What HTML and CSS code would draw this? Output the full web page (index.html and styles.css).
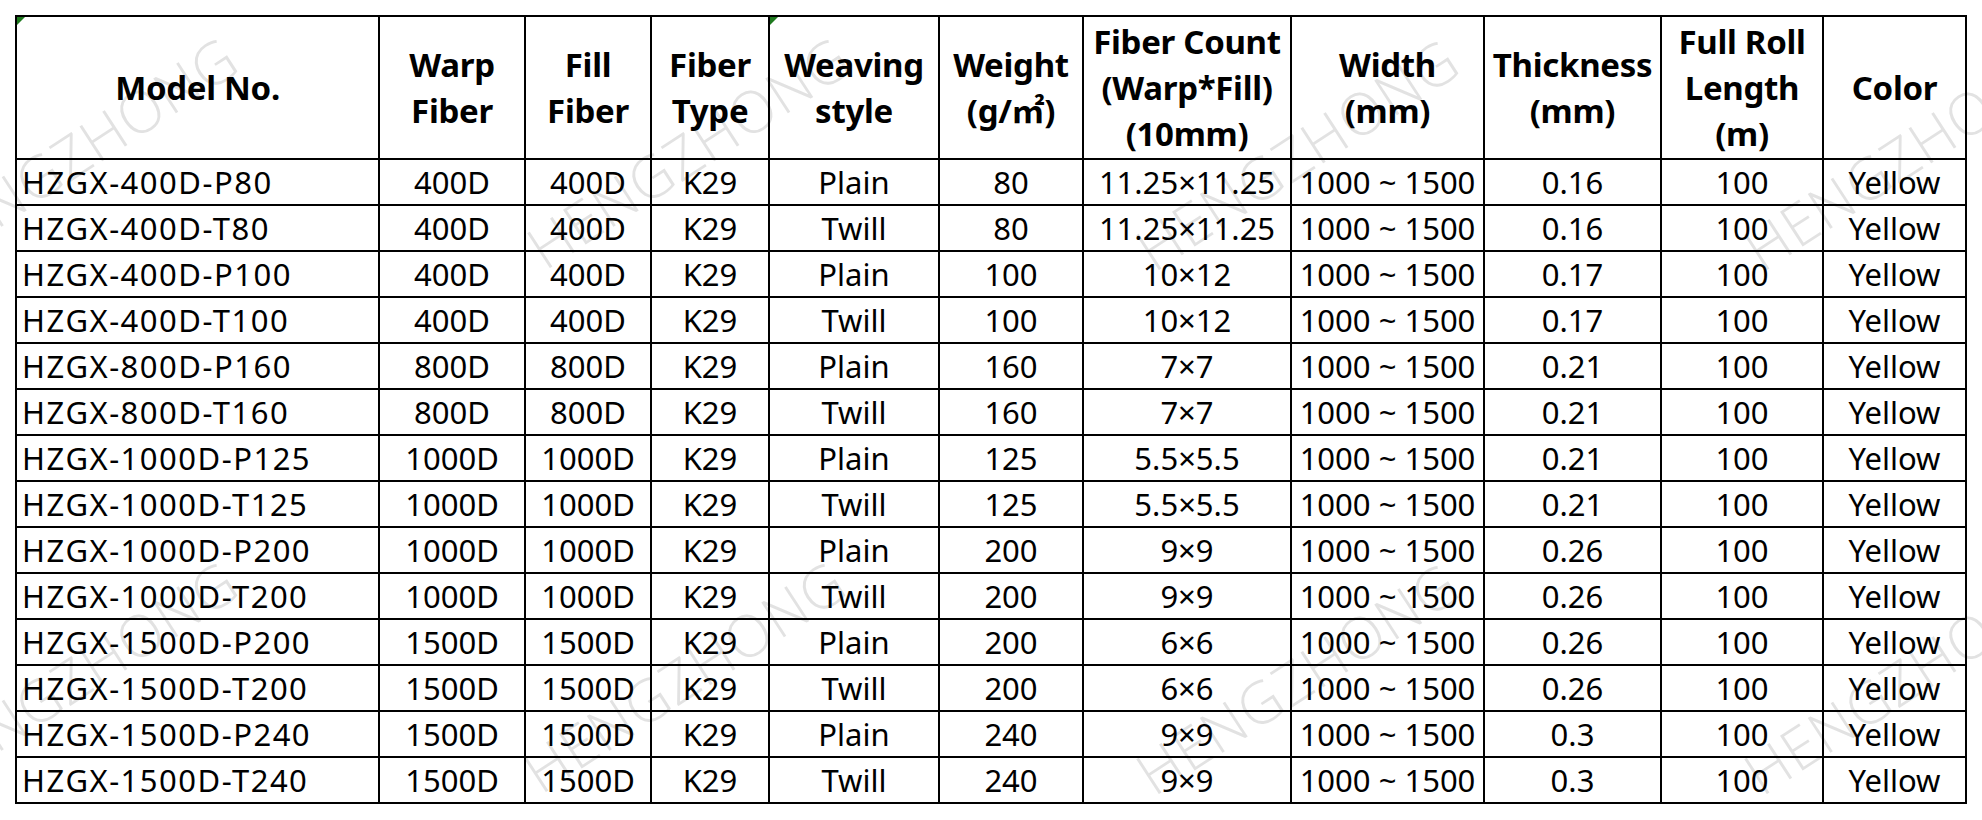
FILE: index.html
```html
<!DOCTYPE html>
<html lang="en">
<head>
<meta charset="utf-8">
<title>HZGX Specifications</title>
<link rel="stylesheet" href="styles.css">
</head>
<body>
<div class="sheet">
  <div class="watermarks" aria-hidden="true">
    <span class="wm" style="left:76px;top:152px">HENGZHONG</span>
    <span class="wm" style="left:688px;top:152px">HENGZHONG</span>
    <span class="wm" style="left:1297px;top:154px">HENGZHONG</span>
    <span class="wm" style="left:1905px;top:154px">HENGZHONG</span>
    <span class="wm" style="left:76px;top:676px">HENGZHONG</span>
    <span class="wm" style="left:684px;top:676px">HENGZHONG</span>
    <span class="wm" style="left:1297px;top:678px">HENGZHONG</span>
    <span class="wm" style="left:1905px;top:678px">HENGZHONG</span>
  </div>
  <table class="spec">
    <colgroup>
      <col class="c-model"><col class="c-warp"><col class="c-fill"><col class="c-type"><col class="c-weave"><col class="c-weight"><col class="c-count"><col class="c-width"><col class="c-thick"><col class="c-roll"><col class="c-color">
    </colgroup>
    <thead>
      <tr>
        <th class="flag">Model No.</th>
        <th>Warp<br>Fiber</th>
        <th>Fill<br>Fiber</th>
        <th>Fiber<br>Type</th>
        <th class="flag">Weaving<br>style</th>
        <th>Weight<br>(g/㎡)</th>
        <th>Fiber Count<br>(Warp*Fill)<br>(10mm)</th>
        <th>Width<br>(mm)</th>
        <th>Thickness<br>(mm)</th>
        <th>Full Roll<br>Length<br>(m)</th>
        <th>Color</th>
      </tr>
    </thead>
    <tbody>
      <tr><td class="model">HZGX-400D-P80</td><td>400D</td><td>400D</td><td>K29</td><td>Plain</td><td>80</td><td>11.25×11.25</td><td>1000 ~ 1500</td><td>0.16</td><td>100</td><td>Yellow</td></tr>
      <tr><td class="model">HZGX-400D-T80</td><td>400D</td><td>400D</td><td>K29</td><td>Twill</td><td>80</td><td>11.25×11.25</td><td>1000 ~ 1500</td><td>0.16</td><td>100</td><td>Yellow</td></tr>
      <tr><td class="model">HZGX-400D-P100</td><td>400D</td><td>400D</td><td>K29</td><td>Plain</td><td>100</td><td>10×12</td><td>1000 ~ 1500</td><td>0.17</td><td>100</td><td>Yellow</td></tr>
      <tr><td class="model">HZGX-400D-T100</td><td>400D</td><td>400D</td><td>K29</td><td>Twill</td><td>100</td><td>10×12</td><td>1000 ~ 1500</td><td>0.17</td><td>100</td><td>Yellow</td></tr>
      <tr><td class="model">HZGX-800D-P160</td><td>800D</td><td>800D</td><td>K29</td><td>Plain</td><td>160</td><td>7×7</td><td>1000 ~ 1500</td><td>0.21</td><td>100</td><td>Yellow</td></tr>
      <tr><td class="model">HZGX-800D-T160</td><td>800D</td><td>800D</td><td>K29</td><td>Twill</td><td>160</td><td>7×7</td><td>1000 ~ 1500</td><td>0.21</td><td>100</td><td>Yellow</td></tr>
      <tr><td class="model">HZGX-1000D-P125</td><td>1000D</td><td>1000D</td><td>K29</td><td>Plain</td><td>125</td><td>5.5×5.5</td><td>1000 ~ 1500</td><td>0.21</td><td>100</td><td>Yellow</td></tr>
      <tr><td class="model">HZGX-1000D-T125</td><td>1000D</td><td>1000D</td><td>K29</td><td>Twill</td><td>125</td><td>5.5×5.5</td><td>1000 ~ 1500</td><td>0.21</td><td>100</td><td>Yellow</td></tr>
      <tr><td class="model">HZGX-1000D-P200</td><td>1000D</td><td>1000D</td><td>K29</td><td>Plain</td><td>200</td><td>9×9</td><td>1000 ~ 1500</td><td>0.26</td><td>100</td><td>Yellow</td></tr>
      <tr><td class="model">HZGX-1000D-T200</td><td>1000D</td><td>1000D</td><td>K29</td><td>Twill</td><td>200</td><td>9×9</td><td>1000 ~ 1500</td><td>0.26</td><td>100</td><td>Yellow</td></tr>
      <tr><td class="model">HZGX-1500D-P200</td><td>1500D</td><td>1500D</td><td>K29</td><td>Plain</td><td>200</td><td>6×6</td><td>1000 ~ 1500</td><td>0.26</td><td>100</td><td>Yellow</td></tr>
      <tr><td class="model">HZGX-1500D-T200</td><td>1500D</td><td>1500D</td><td>K29</td><td>Twill</td><td>200</td><td>6×6</td><td>1000 ~ 1500</td><td>0.26</td><td>100</td><td>Yellow</td></tr>
      <tr><td class="model">HZGX-1500D-P240</td><td>1500D</td><td>1500D</td><td>K29</td><td>Plain</td><td>240</td><td>9×9</td><td>1000 ~ 1500</td><td>0.3</td><td>100</td><td>Yellow</td></tr>
      <tr><td class="model">HZGX-1500D-T240</td><td>1500D</td><td>1500D</td><td>K29</td><td>Twill</td><td>240</td><td>9×9</td><td>1000 ~ 1500</td><td>0.3</td><td>100</td><td>Yellow</td></tr>
    </tbody>
  </table>
</div>
</body>
</html>
```

FILE: styles.css
```css
html, body {
  margin: 0;
  padding: 0;
  background: #ffffff;
}

body {
  font-family: "Noto Sans", "Noto Sans CJK SC", sans-serif;
  color: #000;
}

.sheet {
  position: relative;
  padding: 15px 0 0 15px;
  width: 1982px;
  height: 820px;
  box-sizing: border-box;
  overflow: hidden;
}

.watermarks {
  position: absolute;
  inset: 0;
  z-index: 0;
  pointer-events: none;
}

.wm {
  position: absolute;
  transform: translate(-50%, -50%) rotate(-33deg);
  font-family: "Open Sans", "Noto Sans", sans-serif;
  font-weight: 300;
  font-size: 58px;
  letter-spacing: 1px;
  color: #e2e2e2;
  white-space: nowrap;
  line-height: 1;
}

.spec {
  position: relative;
  z-index: 1;
  border-collapse: collapse;
  table-layout: fixed;
  width: 1951px;
  background: transparent;
}

.c-model { width: 363px; }
.c-warp { width: 146px; }
.c-fill { width: 126px; }
.c-type { width: 118px; }
.c-weave { width: 170px; }
.c-weight { width: 144px; }
.c-count { width: 208px; }
.c-width { width: 193px; }
.c-thick { width: 177px; }
.c-roll { width: 162px; }
.c-color { width: 143px; }

.spec th,
.spec td {
  border: 2px solid #000;
  padding: 0;
  text-align: center;
  vertical-align: middle;
  white-space: nowrap;
  overflow: hidden;
}

.spec th {
  height: 141px;
  font-weight: 700;
  font-size: 33px;
  line-height: 46px;
  letter-spacing: -0.3px;
}

.spec td {
  height: 44px;
  font-size: 31px;
  line-height: 44px;
}

.spec td.model {
  text-align: left;
  padding-left: 5px;
  letter-spacing: 1.5px;
}

.spec th.flag {
  position: relative;
}

.spec th.flag::before {
  content: "";
  position: absolute;
  left: 0;
  top: 0;
  width: 0;
  height: 0;
  border-top: 8px solid #1f7a1f;
  border-right: 8px solid transparent;
}
```
